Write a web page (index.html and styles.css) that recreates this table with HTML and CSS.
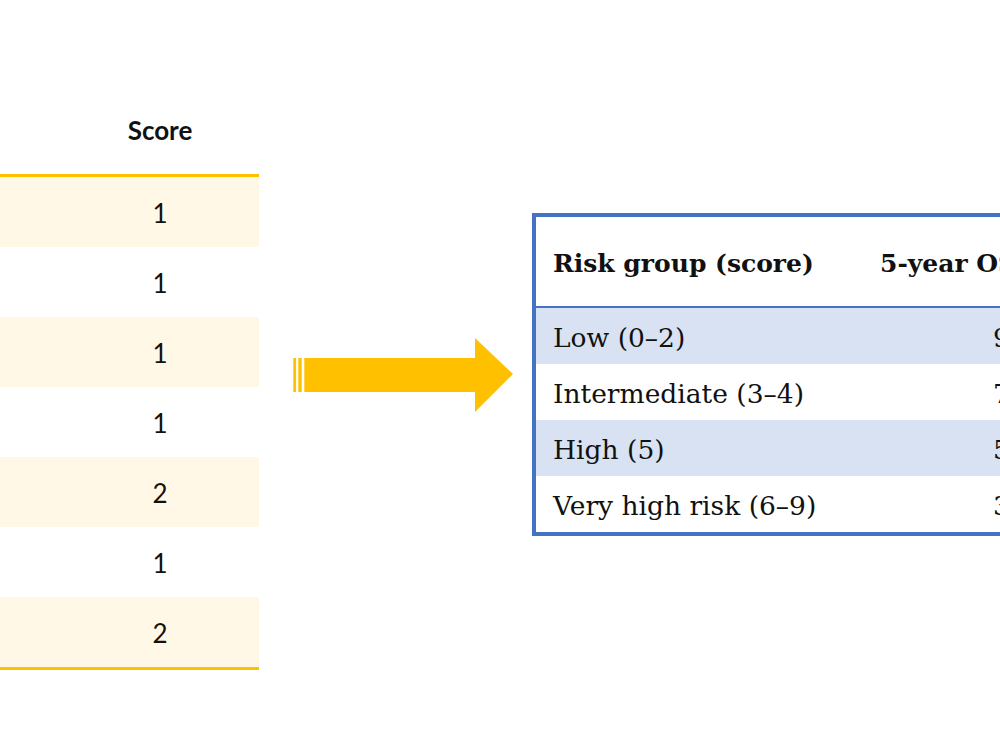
FILE: index.html
```html
<!DOCTYPE html>
<html lang="en">
<head>
<meta charset="utf-8">
<title>Risk score</title>
<link rel="stylesheet" href="styles.css">
</head>
<body>
<div class="page">
  <section class="score-table">
    <div class="score-head">
      <div class="label-col"></div>
      <div class="score-col head-text">Score</div>
    </div>
    <div class="score-body">
      <div class="score-row shaded"><div class="label-col"></div><div class="score-col">1</div></div>
      <div class="score-row"><div class="label-col"></div><div class="score-col">1</div></div>
      <div class="score-row shaded"><div class="label-col"></div><div class="score-col">1</div></div>
      <div class="score-row"><div class="label-col"></div><div class="score-col">1</div></div>
      <div class="score-row shaded"><div class="label-col"></div><div class="score-col">2</div></div>
      <div class="score-row"><div class="label-col"></div><div class="score-col">1</div></div>
      <div class="score-row shaded"><div class="label-col"></div><div class="score-col">2</div></div>
    </div>
  </section>

  <svg class="arrow" width="221" height="74" viewBox="0 0 221 74" aria-hidden="true">
    <rect x="1.3" y="20" width="2.8" height="34" fill="#FFC000"/>
    <rect x="6.3" y="20" width="3.4" height="34" fill="#FFC000"/>
    <rect x="12.3" y="20" width="171" height="34" fill="#FFC000"/>
    <polygon points="183,0 221,36 183,74" fill="#FFC000"/>
  </svg>

  <section class="risk-box">
    <div class="risk-head">
      <div class="c1">Risk group (score)</div>
      <div class="c2">5-year OS (%)</div>
    </div>
    <div class="risk-row shaded"><div class="c1">Low (0–2)</div><div class="c2 val">93</div></div>
    <div class="risk-row"><div class="c1">Intermediate (3–4)</div><div class="c2 val">76</div></div>
    <div class="risk-row shaded"><div class="c1">High (5)</div><div class="c2 val">56</div></div>
    <div class="risk-row"><div class="c1">Very high risk (6–9)</div><div class="c2 val">32</div></div>
  </section>
</div>
</body>
</html>
```

FILE: styles.css
```css
html, body {
  margin: 0;
  padding: 0;
  background: #ffffff;
}
body {
  width: 1000px;
  height: 750px;
  overflow: hidden;
}
.page {
  display: flex;
  align-items: flex-start;
  width: 1400px;
}

/* left score table */
.score-table {
  width: 259px;
  flex: none;
  font-family: Lato, "Open Sans", sans-serif;
  color: #111;
}
.score-head {
  display: flex;
  height: 174px;
  align-items: flex-end;
}
.score-head .score-col {
  height: 64px;
  align-items: flex-start;
  padding-top: 0;
}
.head-text {
  font-weight: 700;
  font-size: 33px;
  line-height: 40px;
}
.score-body {
  border-top: 3px solid #FFC000;
  border-bottom: 3px solid #FFC000;
}
.score-row {
  display: flex;
  height: 70px;
}
.score-row.shaded {
  background: #FFF8E6;
}
.label-col {
  width: 61px;
  flex: none;
}
.score-col {
  flex: 1;
  display: flex;
  align-items: center;
  justify-content: center;
  font-size: 26px;
  padding-top: 2px;
}

/* arrow */
.arrow {
  flex: none;
  display: block;
  margin-left: 33px;
  margin-top: 338px;
}

/* right risk table */
.risk-box {
  flex: none;
  margin-left: 19px;
  margin-top: 213px;
  width: 600px;
  border: 4px solid #4472C4;
  font-family: "DejaVu Serif", serif;
  font-size: 26.5px;
  color: #111;
}
.risk-head {
  display: flex;
  align-items: center;
  height: 86px;
  padding-top: 3px;
  border-bottom: 2px solid #4472C4;
  font-weight: 700;
  font-size: 25px;
}
.risk-row {
  display: flex;
  align-items: center;
  height: 53px;
  padding-top: 3px;
}
.risk-row.shaded {
  background: #D9E2F3;
}
.c1 {
  width: 327px;
  flex: none;
  padding-left: 17px;
  box-sizing: border-box;
  white-space: nowrap;
}
.c2 {
  flex: 1;
  padding-left: 17px;
  white-space: nowrap;
}
.c2.val {
  padding-left: 130px;
}
```
